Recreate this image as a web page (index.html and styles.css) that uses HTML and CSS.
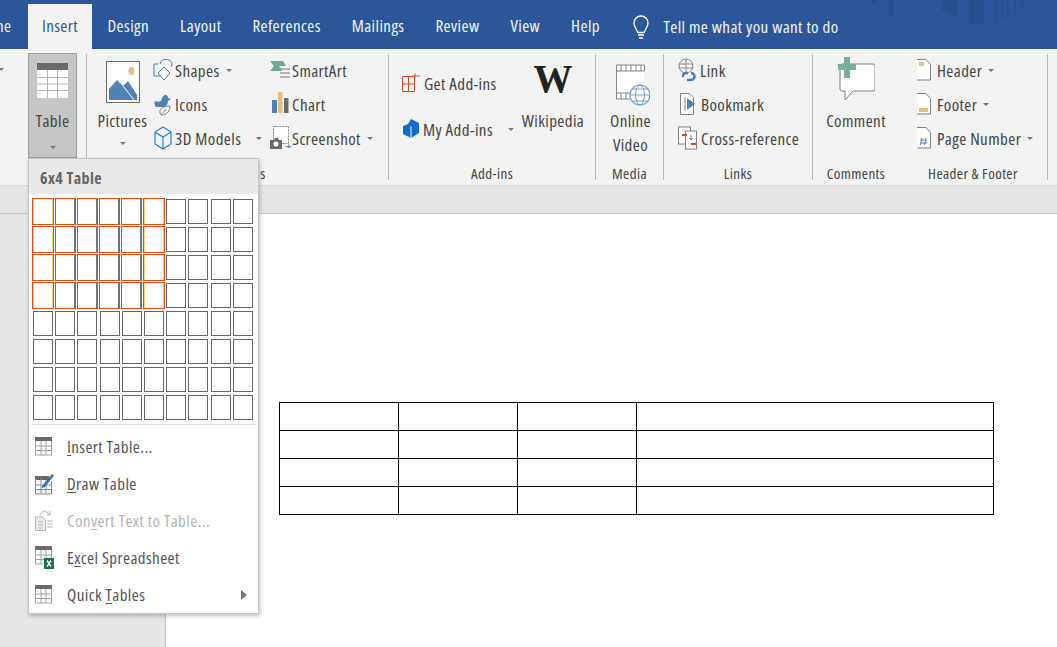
FILE: index.html
```html
<!DOCTYPE html>
<html lang="en">
<head>
<meta charset="utf-8">
<title>Insert Table</title>
<link rel="stylesheet" href="styles.css">
</head>
<body>
<div class="app">
  <header class="titlebar">
    <nav class="tabs">
      <span class="tab tab-home">ne</span>
      <span class="tab tab-active">Insert</span>
      <span class="tab">Design</span>
      <span class="tab">Layout</span>
      <span class="tab">References</span>
      <span class="tab">Mailings</span>
      <span class="tab">Review</span>
      <span class="tab">View</span>
      <span class="tab">Help</span>
    </nav>
    <div class="tell">
      <svg class="bulb" width="18" height="26" viewBox="0 0 18 26"><path d="M5.500 18.500c0-3-3.500-5-3.500-9.500a7 7 0 0 1 14 0c0 4.500-3.500 6.500-3.500 9.500z" fill="none" stroke="#fff" stroke-width="1.300"/><path d="M6 21h6M7 24h4" stroke="#fff" stroke-width="1.500"/></svg>
      <span>Tell me what you want to do</span>
    </div>
    <svg class="pattern" width="185" height="25" viewBox="0 0 185 25"><g fill="#27508e"><rect x="0" width="5" height="3"/><rect x="17" width="5" height="16"/><path d="M70 0h15v18l-15-7z"/><path d="M97 0h15v24h-15z"/><rect x="122" width="3" height="22"/><rect x="129" width="2" height="19"/><rect x="135" width="2" height="18"/><rect x="142" width="2" height="13"/><rect x="149" width="2" height="6"/></g></svg>
  </header>

  <section class="ribbon">
    <div class="group g-tables">
      <svg class="stray-caret" width="5" height="3" viewBox="0 0 5 3"><path d="M0 0h5L2.500 3z" fill="#777"/></svg>
      <button class="table-btn">
        <svg width="31" height="35" viewBox="0 0 31 35"><rect width="31" height="35" fill="#fff"/><rect width="31" height="7" fill="#6a6a6a"/><path d="M0 14.500h31M0 21h31M0 27.500h31M10.500 7v28M20.500 7v28" stroke="#b5b5b5" stroke-width="1"/></svg>
        <span class="big-label">Table</span>
        <span class="caret"></span>
      </button>
    </div>

    <div class="group g-illus">
      <div class="group-body">
        <div class="big b-pictures">
          <span class="big-icon">
            <svg width="34" height="42" viewBox="0 0 34 42"><rect x=".5" y=".5" width="33" height="41" fill="#fff" stroke="#6a6a6a"/><ellipse cx="25.500" cy="10" rx="3" ry="4" fill="#e8bd7f"/><path d="M3 39V28l8-9 6 6 5-5 9 14v5z" fill="#4f81b7"/><path d="M17 25l11 14" stroke="#fff" stroke-width="1"/></svg>
          </span>
          <span class="big-label">Pictures</span>
          <span class="caret caret-under"></span>
        </div>
        <div class="stack s-shapes">
          <div class="row"><svg class="ico" width="20" height="22" viewBox="0 0 20 22"><path d="M5 5H1v12h7" fill="none" stroke="#3f7fbf"/><path d="M7 5a6 5 0 1 1 11 3" fill="none" stroke="#3f7fbf"/><path d="M11 8l6 6-6 7-6-7z" fill="#fff" stroke="#3f7fbf"/></svg><span>Shapes</span><i class="caret"></i></div>
          <div class="row"><svg class="ico" width="20" height="24" viewBox="0 0 20 24"><path d="M2 9c2 1 4 1 6 0 1-1 1-5 4-6 3 0 3 2 3 3l3 1-3 2c0 4-3 6-6 6H4C2 15 1 12 2 9z" fill="#4f81b7"/><path d="M8 23c-3-4 0-9 9-9 0 5-3 9-9 9z" fill="#fff" stroke="#808080"/><path d="M8 23l5-6" stroke="#808080"/></svg><span>Icons</span></div>
          <div class="row"><svg class="ico" width="20" height="24" viewBox="0 0 20 24"><path d="M10 1l8 5v12l-8 5-8-5V6zM2 6l8 5 8-5M10 11v12" fill="none" stroke="#1f82d2" stroke-width="1.200"/></svg><span>3D Models</span><i class="caret caret-far"></i></div>
        </div>
        <div class="stack s-smart">
          <div class="row"><svg class="ico" width="22" height="20" viewBox="0 0 22 20"><path d="M0 1h13l3 5H9l3 5H0l4-5z" fill="#6fa896"/><path d="M10 9h10M10 13h10M10 17h10" stroke="#777"/></svg><span>SmartArt</span></div>
          <div class="row"><svg class="ico" width="22" height="24" viewBox="0 0 22 24"><rect x="2" y="8" width="5" height="13" fill="#4f81b7"/><rect x="8" y="0" width="4.500" height="21" fill="#e8bd7f"/><rect x="14" y="6" width="4.500" height="15" fill="#6a6a6a"/></svg><span>Chart</span></div>
          <div class="row"><svg class="ico" width="22" height="24" viewBox="0 0 22 24"><rect x="3.500" y=".5" width="15" height="17" fill="#fff" stroke="#888" stroke-dasharray="2 1"/><path d="M0 14h4l1-2h3l1 2h3v9H0z" fill="#6a6a6a"/><circle cx="6" cy="18" r="2.500" fill="#fff"/><path d="M15 20h3v-3l1 3h3l-3 2z" fill="#4f81b7"/></svg><span>Screenshot</span><i class="caret"></i></div>
        </div>
      </div>
      <div class="group-label l-illus">Illustrations</div>
    </div>

    <div class="group g-addins">
      <div class="group-body">
        <div class="stack s-addins">
          <div class="row row-tall"><svg class="ico" width="19" height="20" viewBox="0 0 19 20"><path d="M.5 3.500h12v15H.5zM.5 11h12M6.500 3.500v15" fill="none" stroke="#d24726"/><path d="M13 0v6M10 3h8" stroke="#d24726" stroke-width=".8"/></svg><span>Get Add-ins</span></div>
          <div class="row row-tall"><svg class="ico ico-my" width="16" height="20" viewBox="0 0 16 20"><path d="M8 0l8 4v10l-8 5-8-4V7l5-2z" fill="#0f6fc6"/><path d="M8 7v12" stroke="#f3f3f3"/></svg><span>My Add-ins</span><i class="caret caret-far2"></i></div>
        </div>
        <div class="big b-wiki">
          <span class="big-icon wiki-w">W</span>
          <span class="big-label">Wikipedia</span>
        </div>
      </div>
      <div class="group-label">Add-ins</div>
    </div>

    <div class="group g-media">
      <div class="group-body">
        <div class="big b-video">
          <span class="big-icon">
            <svg width="34" height="42" viewBox="0 0 34 42"><rect x=".5" y="1" width="28" height="34" fill="#fff"/><path d="M.5 1h28v6H.5zM.5 7v28h14M.5 29h14M5 1v6M10 1v6M15 1v6M20 1v6M25 1v6M5 29v6M10 29v6" fill="none" stroke="#777" stroke-width=".9"/><circle cx="24" cy="31" r="10" fill="#fff" stroke="#6ea0d0" stroke-width="1.200"/><ellipse cx="24" cy="31" rx="4.500" ry="10" fill="none" stroke="#6ea0d0"/><path d="M14 31h20M16 25h16M16 37h16" stroke="#6ea0d0"/></svg>
          </span>
          <span class="big-label">Online<br>Video</span>
        </div>
      </div>
      <div class="group-label">Media</div>
    </div>

    <div class="group g-links">
      <div class="group-body">
        <div class="stack s-links">
          <div class="row"><svg class="ico" width="18" height="24" viewBox="0 0 18 24"><circle cx="8" cy="8" r="7" fill="#fff" stroke="#808080"/><path d="M1 6h14M1 10h14M8 1v14" stroke="#808080"/><path d="M5 19a3.500 3.500 0 0 1 3-4h2M13 15a3.500 3.500 0 0 1 0 7H9" fill="none" stroke="#3f7fbf" stroke-width="2.500"/></svg><span>Link</span></div>
          <div class="row"><svg class="ico" width="18" height="22" viewBox="0 0 18 22"><path d="M1.500.5h9l4 4v17h-13z" fill="#fff" stroke="#808080"/><path d="M8 5v12l8-6z" fill="#4f81b7"/><path d="M6 4v14" stroke="#808080"/></svg><span>Bookmark</span></div>
          <div class="row"><svg class="ico" width="19" height="24" viewBox="0 0 19 24"><rect x=".5" y="1" width="12" height="17" fill="#fff" stroke="#808080"/><rect x="7.500" y="5" width="11" height="18" fill="#fff" stroke="#808080"/><path d="M4 9h5" stroke="#d24726" stroke-width="2"/><path d="M13 9v5M11 12l2 2 2-2" fill="none" stroke="#777"/><path d="M13 18h5" stroke="#d24726" stroke-width="2"/></svg><span>Cross-reference</span></div>
        </div>
      </div>
      <div class="group-label">Links</div>
    </div>

    <div class="group g-comments">
      <div class="group-body">
        <div class="big b-comment">
          <span class="big-icon">
            <svg width="37" height="44" viewBox="0 0 37 44"><path d="M4 7h31a2 2 0 0 1 2 2v23a2 2 0 0 1-2 2H15l-8 9v-9H4a2 2 0 0 1-2-2V9a2 2 0 0 1 2-2z" fill="#fff" stroke="#808080"/><path d="M6 0h6v7h6v6h-6v8H6v-8H0V7h6z" fill="#76ad9c"/></svg>
          </span>
          <span class="big-label">Comment</span>
        </div>
      </div>
      <div class="group-label">Comments</div>
    </div>

    <div class="group g-header">
      <div class="group-body">
        <div class="stack s-header">
          <div class="row"><svg class="ico" width="14" height="22" viewBox="0 0 14 22"><path d="M0 .5h9l4.500 5v15.500H0" fill="#fff" stroke="#808080"/><rect x="2" y="3" width="5" height="4" fill="#e8bd7f"/></svg><span>Header</span><i class="caret"></i></div>
          <div class="row"><svg class="ico" width="14" height="22" viewBox="0 0 14 22"><path d="M0 .5h9l4.500 5v15.500H0" fill="#fff" stroke="#808080"/><rect x="2" y="15" width="9" height="4" fill="#e8bd7f"/></svg><span>Footer</span><i class="caret"></i></div>
          <div class="row"><svg class="ico" width="14" height="22" viewBox="0 0 14 22"><path d="M0 .5h9l4.500 5v15.500H0" fill="#fff" stroke="#808080"/><path d="M5 11l-1.500 7M9 11l-1.500 7M3 13h7M3 16h7" stroke="#4f81b7"/></svg><span>Page Number</span><i class="caret"></i></div>
        </div>
      </div>
      <div class="group-label">Header &amp; Footer</div>
    </div>
  </section>

  <div class="ruler-strip"></div>

  <main class="workspace">
    <div class="margin-side"></div>
    <div class="page">
      <table class="doc-table">
        <tr><td></td><td></td><td></td><td></td></tr>
        <tr><td></td><td></td><td></td><td></td></tr>
        <tr><td></td><td></td><td></td><td></td></tr>
        <tr><td></td><td></td><td></td><td></td></tr>
      </table>
    </div>
  </main>

  <div class="menu">
    <div class="menu-title">6x4 Table</div>
    <div class="grid">
      <i class="on"></i><i class="on"></i><i class="on"></i><i class="on"></i><i class="on"></i><i class="on"></i><i></i><i></i><i></i><i></i>
      <i class="on"></i><i class="on"></i><i class="on"></i><i class="on"></i><i class="on"></i><i class="on"></i><i></i><i></i><i></i><i></i>
      <i class="on"></i><i class="on"></i><i class="on"></i><i class="on"></i><i class="on"></i><i class="on"></i><i></i><i></i><i></i><i></i>
      <i class="on"></i><i class="on"></i><i class="on"></i><i class="on"></i><i class="on"></i><i class="on"></i><i></i><i></i><i></i><i></i>
      <i></i><i></i><i></i><i></i><i></i><i></i><i></i><i></i><i></i><i></i>
      <i></i><i></i><i></i><i></i><i></i><i></i><i></i><i></i><i></i><i></i>
      <i></i><i></i><i></i><i></i><i></i><i></i><i></i><i></i><i></i><i></i>
      <i></i><i></i><i></i><i></i><i></i><i></i><i></i><i></i><i></i><i></i>
    </div>
    <div class="menu-sep"></div>
    <ul class="menu-list">
      <li><svg width="18" height="19" viewBox="0 0 18 19"><rect y="0" width="17" height="4" fill="#6a6a6a"/><path d="M.5 4v14h16V4M.5 9h16M.5 13.500h16M6 4v14M11 4v14" fill="none" stroke="#a0a0a0"/></svg><span><u>I</u>nsert Table...</span></li>
      <li><svg width="19" height="22" viewBox="0 0 19 22"><rect y="3" width="14" height="4" fill="#6a6a6a"/><path d="M.5 5v16h16V8M.5 12h16M.5 16.500h16M6 5v16M11 7v14" fill="none" stroke="#888"/><path d="M7 13L17 1l2 1.500L10 14l-3 1z" fill="#2f75b5"/></svg><span><u>D</u>raw Table</span></li>
      <li class="off"><svg width="19" height="21" viewBox="0 0 19 21"><path d="M.5 7h7l3 3v10.500H.5z" fill="#eee" stroke="#b5b5b5"/><path d="M3 12h5M3 15h5M3 18h5M12 11h6M12 14h6M12 17h6" stroke="#b5b5b5"/><path d="M5 6c0-5 6-6 8-3l1 2M15 1v4h-3" fill="none" stroke="#b5b5b5"/></svg><span>Con<u>v</u>ert Text to Table...</span></li>
      <li><svg width="19" height="23" viewBox="0 0 19 23"><rect y="0" width="17" height="4" fill="#6a6a6a"/><path d="M.5 4v14h8M16.500 4v8M.5 9h16M.5 13.500h9M6 4v14M11 4v8" fill="none" stroke="#a0a0a0"/><rect x="9" y="12" width="10" height="11" fill="#1e7145"/><path d="M12 14.500l4 6M16 14.500l-4 6" stroke="#fff" stroke-width="1.400"/></svg><span>E<u>x</u>cel Spreadsheet</span></li>
      <li><svg width="18" height="19" viewBox="0 0 18 19"><rect y="0" width="17" height="4" fill="#6a6a6a"/><path d="M.5 4v14h16V4M.5 9h16M.5 13.500h16M6 4v14M11 4v14" fill="none" stroke="#a0a0a0"/></svg><span>Quick <u>T</u>ables</span><b class="arrow"></b></li>
    </ul>
  </div>
</div>
</body>
</html>
```

FILE: styles.css
```css
* { box-sizing: border-box; }
html, body { margin: 0; padding: 0; }
body { width: 1057px; height: 647px; overflow: hidden; font-family: "Open Sans", "Noto Sans", sans-serif; font-size: 17px; font-stretch: 75%; letter-spacing: .4px; color: #444; }
.app { position: relative; width: 1057px; height: 647px; display: flex; flex-direction: column; background: #e6e6e6; }

.titlebar { position: relative; height: 49px; flex: none; background: #2b579a; display: flex; color: #fff; padding-top: 4px; }
.tabs { display: flex; height: 45px; }
.tab { padding: 0 15.500px; line-height: 44px; color: #f2f5fa; white-space: nowrap; }
.tab-home { width: 28px; padding: 0; text-indent: -4px; }
.tab-active { background: #f3f3f3; color: #2b579a; padding: 0 14px; }
.tell { display: flex; align-items: center; height: 45px; margin-left: 17px; gap: 13px; color: #f2f5fa; }
.pattern { position: absolute; left: 872px; top: 0; }

.ribbon { flex: none; height: 137px; background: #f3f3f3; display: flex; padding: 5px 0 6px; border-bottom: 1px solid #d8d8d8; }
.group { position: relative; display: flex; flex-direction: column; height: 126px; border-right: 1px solid #b9b9b9; flex: none; }
.group-body { flex: 1; display: flex; min-height: 0; }
.group-label { height: 14px; font-size: 15px; line-height: 14px; text-align: center; color: #444; white-space: nowrap; }
.g-tables { width: 87px; }
.g-illus { width: 302px; }
.g-addins { width: 207px; }
.g-media { width: 68px; }
.g-links { width: 149px; }
.g-comments { width: 86px; border-right: 0; }
.g-header { width: 149px; border-right: 1px solid #b9b9b9; }
.l-illus { padding-right: 10px; }

.stray-caret { position: absolute; left: -1px; top: 14px; }
.table-btn { width: 49px; height: 105px; margin: -1px 0 0 28px; padding: 9px 0 0; background: #c6c6c6; border: 1px solid #9d9d9d; display: flex; flex-direction: column; align-items: center; font: inherit; letter-spacing: inherit; color: #444; }
.table-btn .big-label { margin-top: 11px; }
.table-btn .caret { margin-top: 13px; }

.big { display: flex; flex-direction: column; align-items: center; flex: none; }
.big-icon { height: 55px; display: flex; align-items: flex-end; justify-content: center; padding-bottom: 6px; flex: none; }
.big-label { line-height: 24px; text-align: center; white-space: nowrap; }
.caret { display: inline-block; width: 0; height: 0; border: 3px solid transparent; border-top: 3px solid #777; border-bottom: 0; }
.caret-under { margin-top: 9px; }

.stack { display: flex; flex-direction: column; flex: none; margin-top: -1px; }
.row { height: 34px; display: flex; align-items: center; white-space: nowrap; position: relative; }
.row .ico { flex: none; }
.row .caret { margin-left: 6px; }
.row-tall { height: 46px; }

.b-pictures { width: 49px; margin-left: 11px; }
.s-shapes { margin-left: 6px; width: 117px; }
.s-shapes .ico { margin-right: 2px; }
.s-smart .ico { margin-right: 0; }
.caret-far { margin-left: 15px !important; }

.s-addins { margin-left: 13px; width: 120px; padding-top: 7px; }
.s-addins .ico { margin-right: 3px; }
.s-addins .ico-my { margin: 0 4px 0 1px; }
.caret-far2 { margin-left: 15px !important; }
.b-wiki { width: 62px; }
.wiki-w { font-family: "Liberation Serif", serif; font-size: 39px; line-height: 1; color: #222; font-weight: 700; letter-spacing: 0; padding-bottom: 11px; }

.b-video { width: 67px; margin-left: 1px; }
.b-video .big-icon { padding: 0 0 3px 5px; }
.s-links { margin-left: 14px; }
.s-links .ico { margin-right: 4px; }
.s-links .row:nth-child(2) .ico { margin-left: 1px; }
.b-comment { width: 86px; }
.b-comment .big-icon { padding-bottom: 8px; }
.s-header { margin-left: 15px; }
.s-header .ico { margin-right: 6px; margin-left: 3px; }

.ruler-strip { flex: none; height: 28px; background: #e6e6e6; border-bottom: 1px solid #c9c9c9; }

.workspace { flex: 1; display: flex; min-height: 0; }
.margin-side { width: 166px; background: #e6e6e6; border-right: 1px solid #c4c4c4; flex: none; }
.page { flex: 1; background: #fff; padding: 188px 0 0 113px; }
.doc-table { border-collapse: collapse; width: 714px; table-layout: fixed; }
.doc-table td { border: 1px solid #000; height: 28px; width: 119px; padding: 0; }
.doc-table td:last-child { width: 357px; }

.menu { position: absolute; left: 28px; top: 158px; width: 231px; height: 456px; background: #fff; border: 1px solid #c6c6c6; box-shadow: 1px 2px 4px rgba(0,0,0,.25); z-index: 5; }
.menu-title { height: 35px; background: #e9e9e9; font-weight: 700; font-size: 16px; line-height: 38px; color: #666; padding-left: 11px; }
.grid { display: grid; grid-template-columns: repeat(10, 20px); grid-auto-rows: 25px; gap: 3px 2.200px; padding: 5px 0 0 4px; }
.grid i { display: block; border: 1.500px solid #666; background: #fff; }
.grid i.on { margin: -1px -.6px; border: 1.500px solid #e8480f; box-shadow: inset -1px 0 0 #777; }
.grid i.on:nth-child(10n+1), .grid i.on:nth-child(10n+6) { box-shadow: inset 1px 0 0 #fbd77e, inset -1px 0 0 #fbd77e; }
.menu-sep { height: 1px; background: #e2e2e2; margin: 4px 2px 0; }
.menu-list { list-style: none; margin: 0; padding: 3px 0 0; }
.menu-list li { height: 37px; display: grid; grid-template-columns: 32px 1fr; align-items: center; position: relative; padding-left: 6px; color: #555; }
.menu-list .off { color: #b4b4b4; }
.menu-list u { text-underline-offset: 2px; }
.arrow { position: absolute; right: 11px; top: 14px; width: 0; height: 0; border: 5px solid transparent; border-left: 6px solid #777; border-right: 0; }
```
